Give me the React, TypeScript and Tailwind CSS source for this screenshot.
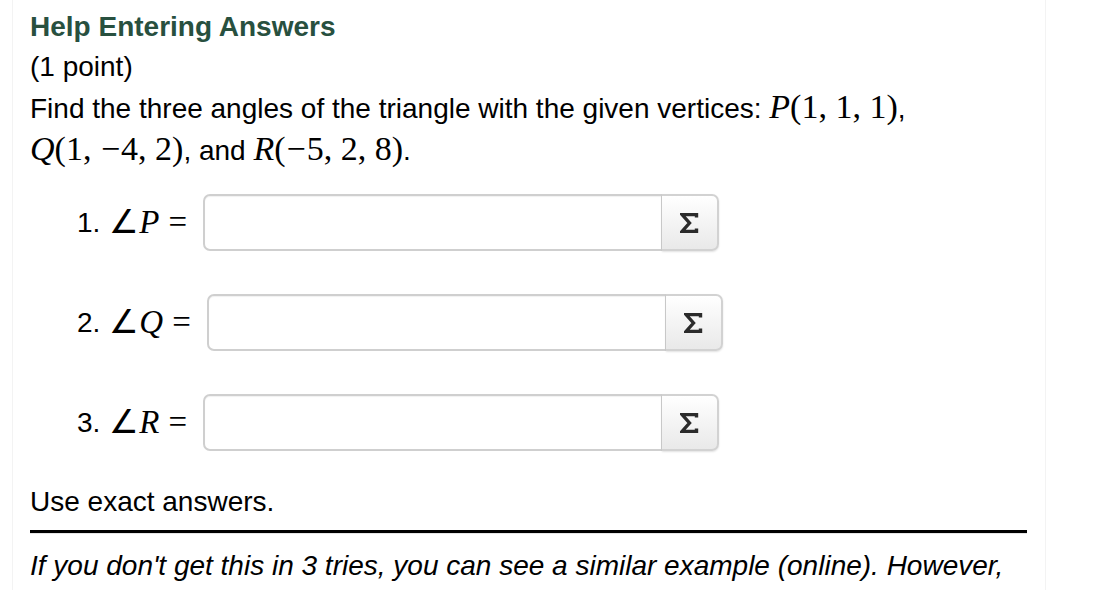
import React from "react";

const sans = "font-['Liberation_Sans',Arial,Helvetica,sans-serif]";
const serif = "font-['Liberation_Serif','Times_New_Roman',serif]";

function M({ children }: { children: React.ReactNode }) {
  return <span className={`${serif} text-[34px]`}>{children}</span>;
}

function V({ children }: { children: React.ReactNode }) {
  return <span className="italic">{children}</span>;
}

function Minus() {
  return <span className="mx-[1px]">−</span>;
}

function Sigma() {
  return (
    <svg width="19" height="20" viewBox="0 0 19 20">
      <path
        d="M16.5 4.5 V1.5 H2 L9.5 10 L2 18.5 H16.5 V15.5"
        fill="none"
        stroke="#2b2b2b"
        strokeWidth="3.4"
        strokeLinejoin="miter"
      />
    </svg>
  );
}

function AnswerRow({ n, v }: { n: number; v: string }) {
  return (
    <div className="flex items-center h-[57px]">
      <span className="text-[28px] leading-none">{n}.</span>
      <span className={`${serif} text-[33px] leading-none ml-[9px]`}>
        ∠<V>{v}</V>
        <span className="ml-[9px]">=</span>
      </span>
      <div className="flex ml-[16px] h-[57px]">
        <input
          type="text"
          className="w-[459px] h-full border-2 border-r-[1.5px] border-[#cfcfcf] rounded-l-[7px] bg-white outline-none shadow-[inset_0_1px_1px_rgba(0,0,0,0.06)]"
        />
        <button className="w-[57px] h-full border-2 border-l-0 border-[#d2d2d2] rounded-r-[7px] bg-gradient-to-b from-white to-[#e9e9e9] flex items-center justify-center shadow-[0_1px_2px_rgba(0,0,0,0.12)]">
          <Sigma />
        </button>
      </div>
    </div>
  );
}

export default function App() {
  return (
    <div className={`${sans} bg-white w-[1102px] h-[590px] overflow-hidden text-black`}>
      <div className="ml-[12px] w-[1034px] h-full border-x border-[#f3f3f3] pl-[17px] pr-[18px] pt-[7px]">
        <div className="text-[28px] font-bold leading-[40px] text-[#28503f]">Help Entering Answers</div>
        <div className="text-[28px] leading-[40px]">(1 point)</div>
        <div className="text-[28px] leading-[40px] whitespace-nowrap">
          Find the three angles of the triangle with the given vertices:{" "}
          <M>
            <V>P</V>(1, 1, 1)
          </M>
          ,
        </div>
        <div className="text-[28px] leading-[40px]">
          <M>
            <V>Q</V>(1, <Minus />4, 2)
          </M>
          , and{" "}
          <M>
            <V>R</V>(<Minus />5, 2, 8)
          </M>
          .
        </div>

        <div className="pl-[47px] mt-[23px] flex flex-col gap-[43px]">
          <AnswerRow n={1} v="P" />
          <AnswerRow n={2} v="Q" />
          <AnswerRow n={3} v="R" />
        </div>

        <div className="text-[28px] leading-[40px] mt-[31px]">Use exact answers.</div>
        <div className="mt-[8px] border-t-[3px] border-black border-b border-b-[#e5e5e5]" />
        <div className="text-[28px] leading-[40px] italic mt-[12px] whitespace-nowrap">
          If you don't get this in 3 tries, you can see a similar example (online). However,
        </div>
      </div>
    </div>
  );
}
